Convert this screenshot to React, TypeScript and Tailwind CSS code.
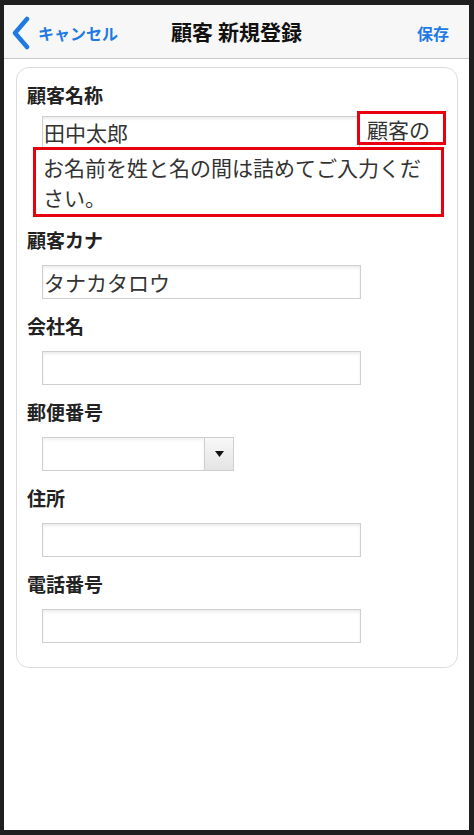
import React from "react";

const jp = '"Noto Sans CJK JP", "Noto Sans", sans-serif';

function Field({ label, children, last }: { label: string; children: React.ReactNode; last?: boolean }) {
  return (
    <div className={last ? "" : "mb-[14px]"}>
      <div className="h-[26px] leading-[26px] text-[19px] font-bold text-[#222] mb-[12px]">{label}</div>
      <div className="pl-[15px]">{children}</div>
    </div>
  );
}

function TextBox({ value }: { value?: string }) {
  return (
    <div className="w-[319px] h-[34px] border border-[#cfcfcf] bg-white shadow-[inset_0_2px_3px_rgba(0,0,0,0.08)] px-[1px] text-[21px] leading-[32px] text-[#333]">
      {value}
    </div>
  );
}

export default function App() {
  return (
    <div className="w-[474px] h-[835px] bg-[#1f1f1f] pt-[5px] pl-[4px] pr-[5px] pb-[5px]" style={{ fontFamily: jp }}>
      <div className="h-full bg-white flex flex-col">
        {/* header */}
        <div className="h-[54px] bg-[#f7f7f7] border-b border-[#c9c9c9] flex items-center relative">
          <div className="flex items-center pl-[6px] pt-[2px]">
            <svg width="22" height="34" viewBox="0 0 22 34" className="mr-[6px]">
              <path d="M17 3 L5 17 L17 31" fill="none" stroke="#1f7ae3" strokeWidth="4.5" strokeLinecap="round" strokeLinejoin="round" />
            </svg>
            <span className="text-[16px] font-bold text-[#1f7ae3]">キャンセル</span>
          </div>
          <div className="absolute left-0 right-0 text-center text-[21px] font-bold text-[#111] pointer-events-none">顧客 新規登録</div>
          <span className="ml-auto mr-[20px] pt-[2px] text-[16px] font-bold text-[#1f7ae3]">保存</span>
        </div>

        {/* card */}
        <div className="mt-[8px] ml-[12px] mr-[11px] border border-[#dcdcdc] rounded-[13px] pt-[14px] pb-[24px] pl-[10px]">
          {/* first field with inline help */}
          <div className="mb-[10px]">
            <div className="h-[26px] leading-[26px] text-[19px] font-bold text-[#222] mb-[3px]">顧客名称</div>
            <div className="flex items-start h-[36px] pl-[15px]">
              <div className="mt-[5px] w-[318px] h-[31px] border border-b-0 border-[#cfcfcf] shadow-[inset_0_2px_3px_rgba(0,0,0,0.08)] px-[1px] text-[21px] leading-[30px] text-[#333]">
                田中太郎
              </div>
              <div className="-ml-[3px] h-[34px] border-[3px] border-[#e8000e] bg-white pl-[7px] pr-[13px] text-[21px] leading-[30px] text-[#333]">
                顧客の
              </div>
            </div>
            <div className="ml-[6px] w-[411px] border-[3px] border-[#e8000e] bg-white pl-[7px] pt-[2px] pb-[2px] text-[21px] leading-[30px] text-[#333]">
              お名前を姓と名の間は詰めてご入力ください。
            </div>
          </div>

          <Field label="顧客カナ">
            <TextBox value="タナカタロウ" />
          </Field>
          <Field label="会社名">
            <TextBox />
          </Field>
          <Field label="郵便番号">
            <div className="flex w-[192px] h-[34px] border border-[#cfcfcf] bg-white">
              <div className="flex-1 shadow-[inset_0_2px_3px_rgba(0,0,0,0.06)]" />
              <div className="w-[29px] border-l border-[#cfcfcf] bg-gradient-to-b from-[#f8f8f8] to-[#e4e4e4] flex items-center justify-center">
                <svg width="9" height="6" viewBox="0 0 9 6">
                  <path d="M0 0 L9 0 L4.5 6 Z" fill="#111" />
                </svg>
              </div>
            </div>
          </Field>
          <Field label="住所">
            <TextBox />
          </Field>
          <Field label="電話番号" last>
            <TextBox />
          </Field>
        </div>
      </div>
    </div>
  );
}
